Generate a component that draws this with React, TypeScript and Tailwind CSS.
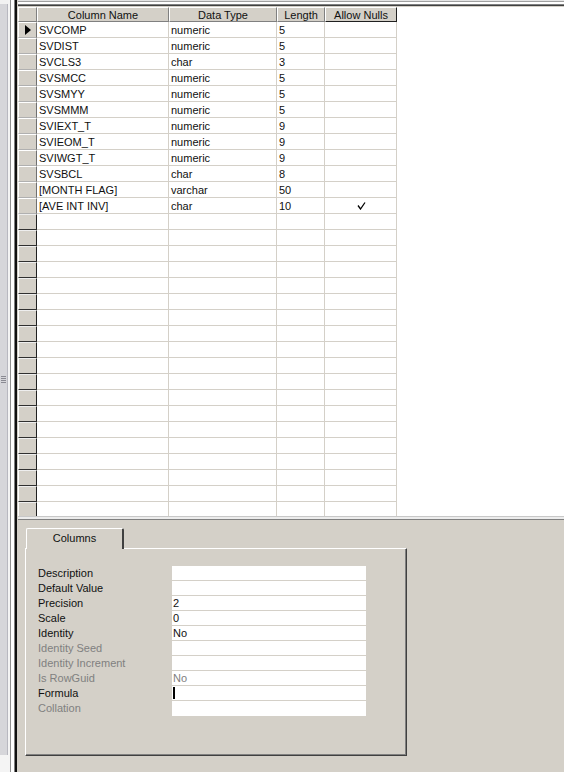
import React from "react";

type Col = { name: string; type: string; length: string; nulls?: boolean };

const COLUMNS: Col[] = [
  { name: "SVCOMP", type: "numeric", length: "5" },
  { name: "SVDIST", type: "numeric", length: "5" },
  { name: "SVCLS3", type: "char", length: "3" },
  { name: "SVSMCC", type: "numeric", length: "5" },
  { name: "SVSMYY", type: "numeric", length: "5" },
  { name: "SVSMMM", type: "numeric", length: "5" },
  { name: "SVIEXT_T", type: "numeric", length: "9" },
  { name: "SVIEOM_T", type: "numeric", length: "9" },
  { name: "SVIWGT_T", type: "numeric", length: "9" },
  { name: "SVSBCL", type: "char", length: "8" },
  { name: "[MONTH FLAG]", type: "varchar", length: "50" },
  { name: "[AVE INT INV]", type: "char", length: "10", nulls: true },
];

const EMPTY_ROWS = 19;

const PROPS: { label: string; value?: string; disabled?: boolean; caret?: boolean }[] = [
  { label: "Description" },
  { label: "Default Value" },
  { label: "Precision", value: "2" },
  { label: "Scale", value: "0" },
  { label: "Identity", value: "No" },
  { label: "Identity Seed", disabled: true },
  { label: "Identity Increment", disabled: true },
  { label: "Is RowGuid", value: "No", disabled: true },
  { label: "Formula", caret: true },
  { label: "Collation", disabled: true },
];

export default function App() {
  return (
    <div
      className="flex h-[772px] w-[564px] overflow-hidden bg-[#d4d0c8] text-[11px] text-[#101010]"
      style={{ fontFamily: '"Liberation Sans", Arial, sans-serif' }}
    >
      <LeftEdge />
      <div className="flex min-w-0 flex-1 flex-col">
        <TopFrame />
        <ColumnGrid />
        <Splitter />
        <PropertiesPanel />
      </div>
    </div>
  );
}

function LeftEdge() {
  return (
    <div className="flex h-full shrink-0">
      <div className="flex w-[8px] flex-col">
        <div className="h-[4px] bg-[#f2f2f2]" />
        <div className="flex flex-1 flex-col items-center justify-center gap-[1px] border-r border-[#b8b8c0] bg-[#d6d6da]">
          <div className="h-[1px] w-[5px] bg-[#8a8a92]" />
          <div className="h-[1px] w-[5px] bg-[#8a8a92]" />
          <div className="h-[1px] w-[5px] bg-[#8a8a92]" />
          <div className="h-[1px] w-[5px] bg-[#8a8a92]" />
        </div>
        <div className="h-[17px] bg-[#f4f4f4]" />
      </div>
      <div className="w-[2px] bg-[#f4f4f4]" />
      <div className="w-[1px] bg-[#909090]" />
      <div className="w-[3px] bg-white" />
      <div className="w-[1px] bg-[#808080]" />
      <div className="w-[2px] bg-[#101010]" />
      <div className="w-[1px] bg-[#d4d0c8]" />
    </div>
  );
}

function TopFrame() {
  return (
    <div className="flex shrink-0 flex-col">
      <div className="h-[1px] bg-[#e4e4e4]" />
      <div className="h-[1px] bg-[#a0a0a0]" />
      <div className="h-[2px] bg-white" />
      <div className="h-[1px] bg-[#808080]" />
      <div className="h-[1px] bg-[#404040]" />
      <div className="h-[1px] bg-[#d4d0c8]" />
    </div>
  );
}

const W = { hdr: "w-[19px]", name: "w-[132px]", type: "w-[108px]", len: "w-[48px]", nulls: "w-[72px]" };

function HeaderCell({ w, label, last }: { w: string; label?: string; last?: boolean }) {
  return (
    <div
      className={`${w} flex h-[15px] shrink-0 items-center justify-center border-t border-l border-t-white border-l-white border-b bg-[#d4d0c8] pt-[1px] leading-none ${
        last ? "border-r border-r-[#202020] border-b-[#202020]" : "border-r border-r-[#808080] border-b-[#808080]"
      }`}
    >
      {label}
    </div>
  );
}

function Cell({ w, children, center }: { w: string; children?: React.ReactNode; center?: boolean }) {
  return (
    <div
      className={`${w} flex h-[16px] shrink-0 items-center border-r border-b border-[#d4d0c8] pt-[1px] ${
        center ? "justify-center" : "pl-[2px]"
      } overflow-hidden whitespace-nowrap leading-none`}
    >
      {children}
    </div>
  );
}

function Check() {
  return (
    <svg width="9" height="8" viewBox="0 0 9 8" className="ml-[2px]">
      <path d="M1 3.5 L3.5 7 L8 0.5" fill="none" stroke="#000" strokeWidth="1.3" />
    </svg>
  );
}

function ColumnGrid() {
  return (
    <div className="flex h-[509px] shrink-0 flex-col overflow-hidden bg-white">
      <div className="flex">
        <HeaderCell w={W.hdr} />
        <HeaderCell w={W.name} label="Column Name" />
        <HeaderCell w={W.type} label="Data Type" />
        <HeaderCell w={W.len} label="Length" />
        <HeaderCell w={W.nulls} label="Allow Nulls" last />
      </div>
      {COLUMNS.map((c, i) => (
        <div key={c.name} className="flex">
          <div className="flex h-[16px] w-[19px] shrink-0 items-center border-t border-l border-t-white border-l-white border-r border-b border-r-[#707070] border-b-[#b0b0b0] bg-[#d4d0c8] pl-[6px]">
            {i === 0 && (
              <svg width="6" height="10" viewBox="0 0 6 10">
                <path d="M0 0 L6 5 L0 10 Z" fill="#000" />
              </svg>
            )}
          </div>
          <Cell w={W.name}>{c.name}</Cell>
          <Cell w={W.type}>{c.type}</Cell>
          <Cell w={W.len}>{c.length}</Cell>
          <Cell w={W.nulls} center>
            {c.nulls && <Check />}
          </Cell>
        </div>
      ))}
      {Array.from({ length: EMPTY_ROWS }).map((_, i) => (
        <div key={i} className="flex">
          <div className="h-[16px] w-[19px] shrink-0 border-t border-l border-t-[#eeeeee] border-l-white border-r border-b border-r-[#202020] border-b-[#303030] bg-[#d4d0c8]" />
          <Cell w={W.name} />
          <Cell w={W.type} />
          <Cell w={W.len} />
          <Cell w={W.nulls} />
        </div>
      ))}
    </div>
  );
}

function Splitter() {
  return (
    <div className="flex shrink-0 flex-col">
      <div className="h-[1px] bg-[#c8c8c8]" />
      <div className="h-[2px] bg-[#ececec]" />
      <div className="h-[1px] bg-[#808080]" />
    </div>
  );
}

function PropertiesPanel() {
  return (
    <div className="flex flex-1 flex-col pt-[8px]">
      <div className="relative z-10 -mb-px ml-[8px] flex h-[21px] w-[98px] items-center justify-center rounded-tl-[2px] rounded-tr-[2px] border-t border-l border-t-white border-l-white border-r-2 border-r-[#404040] bg-[#d4d0c8] pb-[2px]">
        Columns
      </div>
      <div className="ml-[7px] h-[208px] w-[382px] border-t border-l border-t-white border-l-white border-r border-b border-r-[#404040] border-b-[#404040] pt-[17px] pl-[12px] shadow-[inset_-1px_-1px_0_#808080]">
        {PROPS.map((p, i) => (
          <div key={p.label} className="flex h-[15px]">
            <div className={`w-[134px] leading-[15px] ${p.disabled ? "text-[#808080]" : ""}`}>{p.label}</div>
            <div
              className={`flex w-[194px] items-center bg-white pl-[1px] leading-none ${
                i < PROPS.length - 1 ? "border-b border-[#d4d0c8]" : ""
              } ${p.disabled ? "text-[#808080]" : ""}`}
            >
              {p.caret ? <div className="h-[12px] w-[2px] bg-black" /> : p.value}
            </div>
          </div>
        ))}
      </div>
    </div>
  );
}
